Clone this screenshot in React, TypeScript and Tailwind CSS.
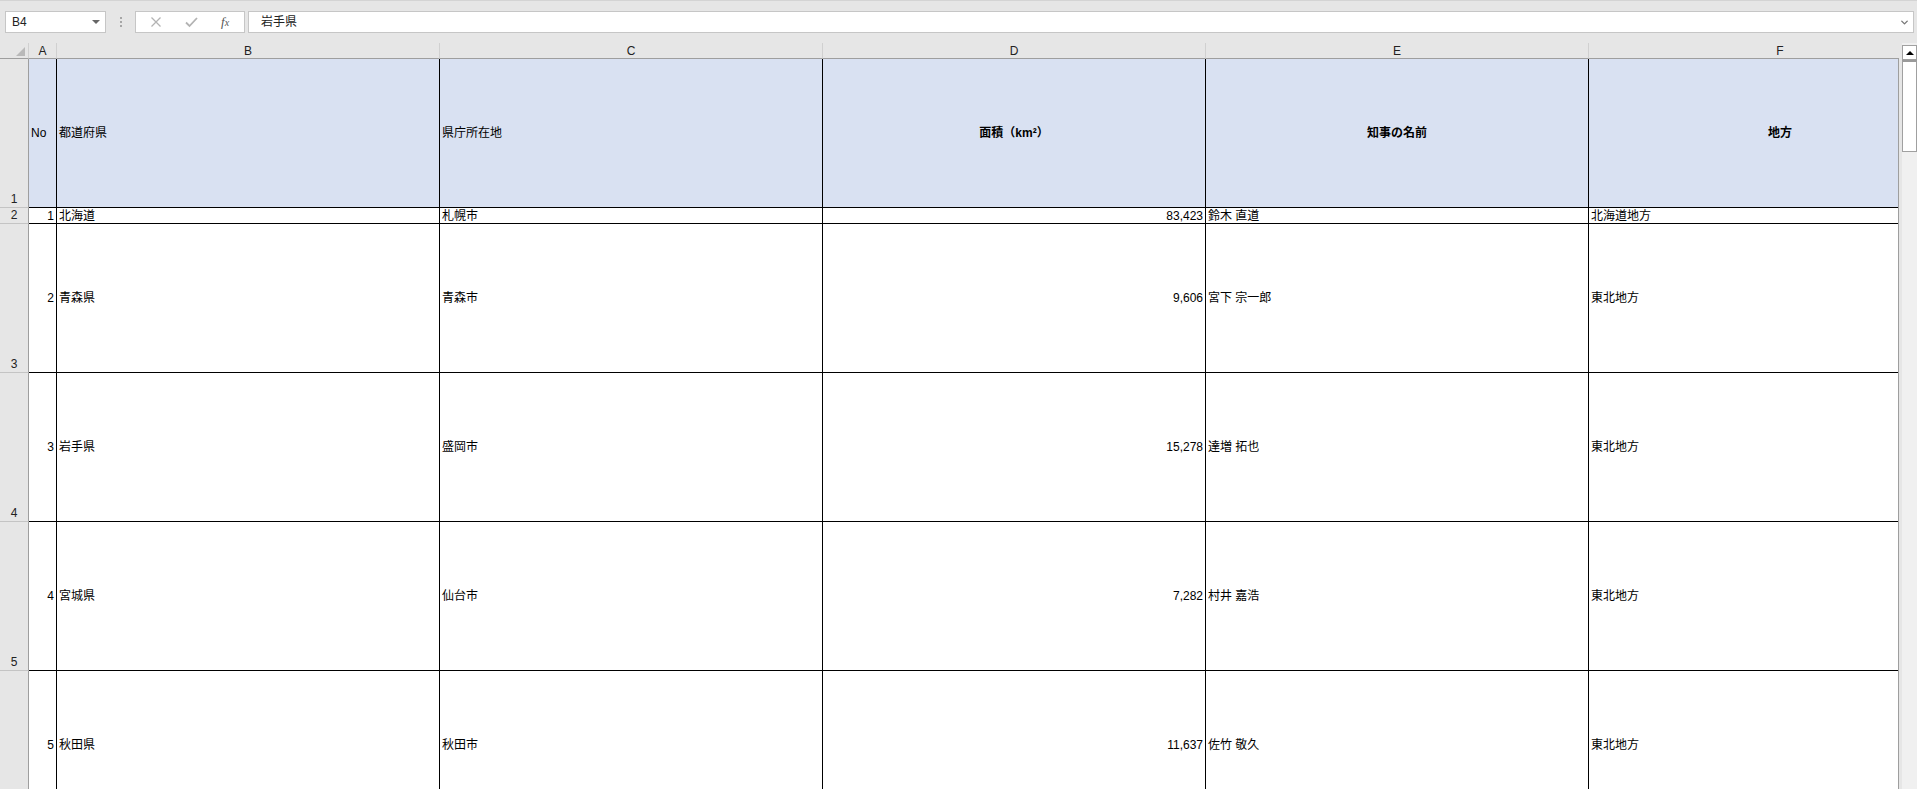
import { ChevronDown } from 'lucide-react'

const cols = ['A', 'B', 'C', 'D', 'E', 'F']

const rows = [
  ['1', '北海道', '札幌市', '83,423', '鈴木 直道', '北海道地方'],
  ['2', '青森県', '青森市', '9,606', '宮下 宗一郎', '東北地方'],
  ['3', '岩手県', '盛岡市', '15,278', '達増 拓也', '東北地方'],
  ['4', '宮城県', '仙台市', '7,282', '村井 嘉浩', '東北地方'],
  ['5', '秋田県', '秋田市', '11,637', '佐竹 敬久', '東北地方'],
]

const font = "font-['Liberation_Sans','Noto_Sans_CJK_JP',sans-serif]"
const gridCols = 'grid w-[1917px] grid-cols-[29px_28px_383px_383px_383px_383px_383px]'

function RowHead({ n, tall }: { n: string; tall?: boolean }) {
  return (
    <div
      className={`flex justify-center border-r border-b border-r-[#9e9e9e] border-b-[#c4c4c4] bg-[#e6e6e6] text-[12px] leading-[15px] text-[#222] ${
        tall ? 'items-end' : 'items-center'
      }`}
    >
      {n}
    </div>
  )
}

function Cell({
  children,
  align = 'left',
  bold,
  className = '',
}: {
  children?: React.ReactNode
  align?: 'left' | 'right' | 'center'
  bold?: boolean
  className?: string
}) {
  const justify =
    align === 'right' ? 'justify-end pr-[2px]' : align === 'center' ? 'justify-center' : 'justify-start pl-[2px]'
  return (
    <div
      className={`flex items-center overflow-hidden whitespace-nowrap border-b border-r border-black leading-[14px] ${justify} ${
        bold ? 'font-bold' : ''
      } ${className}`}
    >
      {children}
    </div>
  )
}

function FormulaBar() {
  return (
    <div className="flex h-[43px] shrink-0 items-center border-t border-[#d4d4d4] bg-[#e6e6e6]">
      <div className="ml-[5px] flex h-[22px] w-[101px] items-center justify-between border border-[#c6c6c6] bg-white pl-[6px] pr-[5px] text-[12px] text-[#222]">
        <span>B4</span>
        <span className="h-0 w-0 border-x-[4px] border-t-[4px] border-x-transparent border-t-[#666]" />
      </div>
      <div className="ml-[14px] flex w-[3px] flex-col gap-[2px]">
        <span className="h-[2px] w-[2px] bg-[#a6a6a6]" />
        <span className="h-[2px] w-[2px] bg-[#a6a6a6]" />
        <span className="h-[2px] w-[2px] bg-[#a6a6a6]" />
      </div>
      <div className="ml-[12px] flex h-[22px] w-[110px] items-center border border-[#c6c6c6] bg-white">
        <svg className="ml-[14px]" width="12" height="12" viewBox="0 0 12 12">
          <path d="M1.5 1.5 L10.5 10.5 M10.5 1.5 L1.5 10.5" stroke="#b3b3b3" strokeWidth="1.3" />
        </svg>
        <svg className="ml-[23px]" width="13" height="12" viewBox="0 0 13 12">
          <path d="M1 6.5 L4.5 10 L12 2" stroke="#b3b3b3" strokeWidth="1.8" fill="none" />
        </svg>
        <span className="ml-[23px] font-['Liberation_Serif',serif] text-[13px] italic text-[#555]">
          f<span className="text-[10px]">x</span>
        </span>
      </div>
      <div className="ml-[3px] mr-[3px] flex h-[22px] flex-1 items-center justify-between border border-[#c6c6c6] bg-white pl-[12px] pr-[3px] text-[12px] text-[#222]">
        <span>岩手県</span>
        <ChevronDown size={11} strokeWidth={3} color="#777" />
      </div>
    </div>
  )
}

function Scrollbar() {
  return (
    <div className="flex w-[15px] shrink-0 flex-col bg-[#f0f0f0] pt-[2px]">
      <div className="flex h-[15px] items-center justify-center border border-[#a0a0a0] bg-white">
        <span className="h-0 w-0 border-x-[4px] border-b-[4px] border-x-transparent border-b-black" />
      </div>
      <div className="h-[92px] border border-t-[2px] border-[#a0a0a0] border-t-[#9a9a9a] bg-white" />
    </div>
  )
}

export default function App() {
  return (
    <div className={`flex h-[789px] w-[1917px] flex-col overflow-hidden bg-[#e6e6e6] text-black ${font}`}>
      <FormulaBar />
      <div className="flex min-h-0 flex-1">
        <div className="flex-1 overflow-hidden">
          {/* column headers */}
          <div className="w-[1899px] overflow-hidden">
            <div className={`${gridCols} grid-rows-[16px]`}>
              <div className="relative border-b border-r border-b-[#9e9e9e] border-r-[#d0d0d0] bg-[#e6e6e6]">
                <span className="absolute bottom-[2px] right-[3px] h-0 w-0 border-l-[9px] border-t-[9px] border-l-transparent border-t-transparent border-r-0 border-b-[9px] border-b-[#b9b9b9]" />
              </div>
              {cols.map((c) => (
                <div
                  key={c}
                  className="flex items-center justify-center border-b border-r border-b-[#9e9e9e] border-r-[#d0d0d0] bg-[#e6e6e6] text-[12px] leading-[14px] text-[#222]"
                >
                  {c}
                </div>
              ))}
            </div>
          </div>

          {/* sheet body */}
          <div className="w-[1899px] overflow-hidden border-r border-[#9e9e9e]">
            <div className={`${gridCols} grid-rows-[149px_16px_149px_149px_149px_149px] text-[12px]`}>
              <RowHead n="1" tall />
              <Cell className="bg-[#d9e1f2]">No</Cell>
              <Cell className="bg-[#d9e1f2]">都道府県</Cell>
              <Cell className="bg-[#d9e1f2]">県庁所在地</Cell>
              <Cell className="bg-[#d9e1f2]" align="center" bold>
                面積（km²）
              </Cell>
              <Cell className="bg-[#d9e1f2]" align="center" bold>
                知事の名前
              </Cell>
              <Cell className="bg-[#d9e1f2]" align="center" bold>
                地方
              </Cell>

              {rows.map((r, i) => (
                <div key={r[0]} className="contents">
                  <RowHead n={String(i + 2)} tall={i > 0} />
                  <Cell className="bg-white" align="right">
                    {r[0]}
                  </Cell>
                  <Cell className="bg-white">{r[1]}</Cell>
                  <Cell className="bg-white">{r[2]}</Cell>
                  <Cell className="bg-white" align="right">
                    {r[3]}
                  </Cell>
                  <Cell className="bg-white">{r[4]}</Cell>
                  <Cell className="bg-white">{r[5]}</Cell>
                </div>
              ))}
            </div>
          </div>
        </div>
        <Scrollbar />
      </div>
    </div>
  )
}
